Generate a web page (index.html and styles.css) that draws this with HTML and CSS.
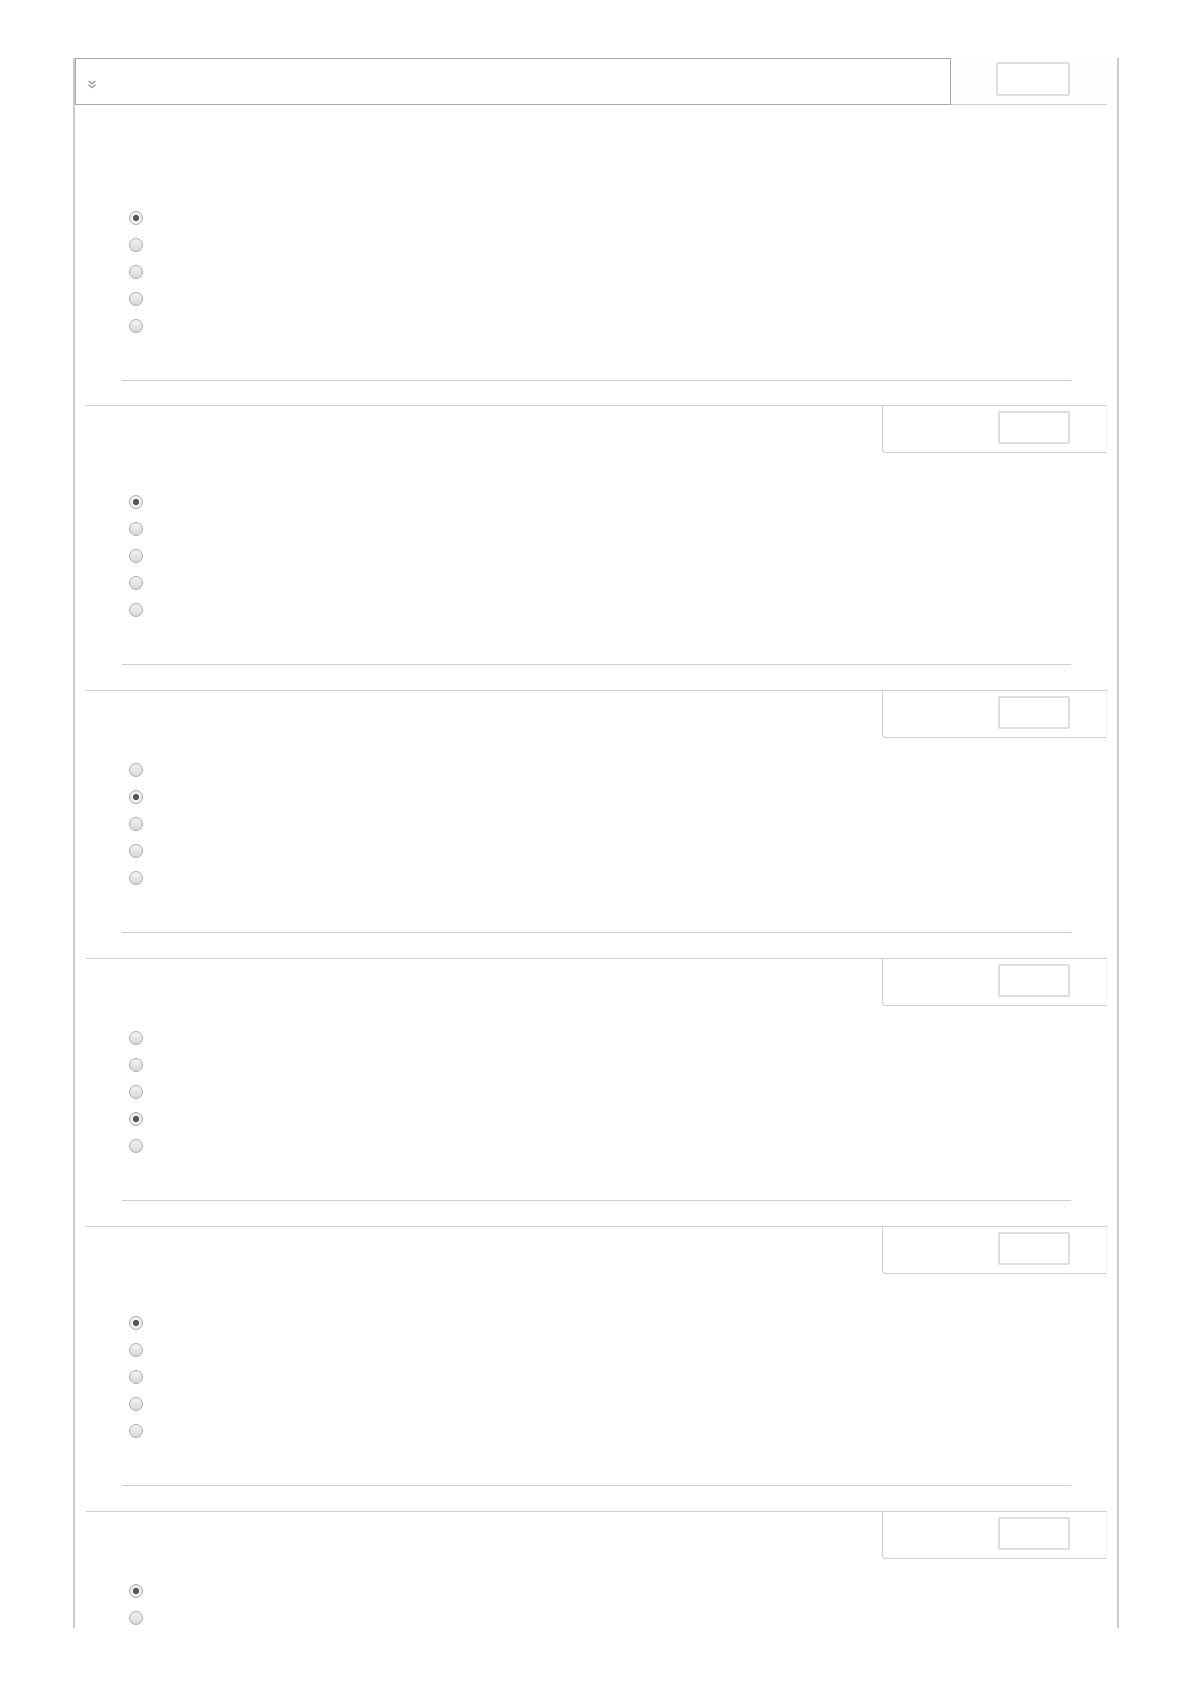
FILE: index.html
```html
<!DOCTYPE html>
<html>
<head>
    <title>Quiz</title>
    <link rel="stylesheet" href="styles.css">
</head>
<body>
    <div id="quizPage">
        <div class="quizHeader">
            <div class="headerBox">
                <svg class="collapseIcon" width="10" height="9" viewBox="0 0 10 9">
                    <path d="M1.5 1 L5 3.8 L8.5 1" />
                    <path d="M1.5 4.8 L5 7.6 L8.5 4.8" />
                </svg>
            </div>
            <div class="headerGrade">
                <div class="gradeBox"></div>
            </div>
        </div>

        <div class="que first">
            <div class="qtext tall"></div>
            <div class="answer">
                <div class="option"><input type="radio" name="q1" checked></div>
                <div class="option"><input type="radio" name="q1"></div>
                <div class="option"><input type="radio" name="q1"></div>
                <div class="option"><input type="radio" name="q1"></div>
                <div class="option"><input type="radio" name="q1"></div>
            </div>
            <div class="separator"></div>
        </div>

        <div class="que">
            <div class="info"><div class="gradeBox"></div></div>
            <div class="qtext twoLines"></div>
            <div class="answer">
                <div class="option"><input type="radio" name="q2" checked></div>
                <div class="option"><input type="radio" name="q2"></div>
                <div class="option"><input type="radio" name="q2"></div>
                <div class="option"><input type="radio" name="q2"></div>
                <div class="option"><input type="radio" name="q2"></div>
            </div>
            <div class="separator"></div>
        </div>

        <div class="que">
            <div class="info"><div class="gradeBox"></div></div>
            <div class="qtext"></div>
            <div class="answer">
                <div class="option"><input type="radio" name="q3"></div>
                <div class="option"><input type="radio" name="q3" checked></div>
                <div class="option"><input type="radio" name="q3"></div>
                <div class="option"><input type="radio" name="q3"></div>
                <div class="option"><input type="radio" name="q3"></div>
            </div>
            <div class="separator"></div>
        </div>

        <div class="que">
            <div class="info"><div class="gradeBox"></div></div>
            <div class="qtext"></div>
            <div class="answer">
                <div class="option"><input type="radio" name="q4"></div>
                <div class="option"><input type="radio" name="q4"></div>
                <div class="option"><input type="radio" name="q4"></div>
                <div class="option"><input type="radio" name="q4" checked></div>
                <div class="option"><input type="radio" name="q4"></div>
            </div>
            <div class="separator"></div>
        </div>

        <div class="que">
            <div class="info"><div class="gradeBox"></div></div>
            <div class="qtext twoLines"></div>
            <div class="answer">
                <div class="option"><input type="radio" name="q5" checked></div>
                <div class="option"><input type="radio" name="q5"></div>
                <div class="option"><input type="radio" name="q5"></div>
                <div class="option"><input type="radio" name="q5"></div>
                <div class="option"><input type="radio" name="q5"></div>
            </div>
            <div class="separator"></div>
        </div>

        <div class="que">
            <div class="info"><div class="gradeBox"></div></div>
            <div class="qtext"></div>
            <div class="answer">
                <div class="option"><input type="radio" name="q6" checked></div>
                <div class="option"><input type="radio" name="q6"></div>
                <div class="option"><input type="radio" name="q6"></div>
                <div class="option"><input type="radio" name="q6"></div>
                <div class="option"><input type="radio" name="q6"></div>
            </div>
            <div class="separator"></div>
        </div>
    </div>
</body>
</html>
```

FILE: styles.css
```css
body, html {
    margin: 0;
    padding: 0;
    background-color: #fff;
    font-family: "Liberation Sans", Arial, sans-serif;
    font-size: 13px;
}
#quizPage {
    margin: 58px 0 0 73px;
    width: 1042px;
    height: 1570px;
    overflow: hidden;
    border-left: 2px solid #ccc;
    border-right: 2px solid #ccc;
}

/* top bar */
.quizHeader {
    display: flex;
}
.headerBox {
    box-sizing: border-box;
    width: 876px;
    height: 47px;
    border: 1px solid #a8a8a8;
    padding: 21px 0 0 11px;
}
.collapseIcon {
    display: block;
}
.collapseIcon path {
    fill: none;
    stroke: #999;
    stroke-width: 1.4;
}
.headerGrade {
    box-sizing: border-box;
    width: 156px;
    height: 47px;
    padding: 4px 0 0 45px;
    background-color: #fefefe;
    border-bottom: 1px solid #ccc;
}
.headerGrade .gradeBox {
    width: 74px;
    height: 34px;
}
.gradeBox {
    box-sizing: border-box;
    width: 72px;
    height: 33px;
    border: 2px solid #ddd;
    border-radius: 2px;
    background-color: #fff;
}

/* questions */
.que {
    margin: 0 10px 0 11px;
    border-top: 1px solid #ccc;
}
.que.first {
    border-top: none;
}
.info {
    float: right;
    box-sizing: border-box;
    width: 225px;
    height: 47px;
    padding: 5px 36px 0 0;
    display: flex;
    justify-content: flex-end;
    border-left: 1px solid #ccc;
    border-bottom: 1px solid #ccc;
    border-right: 1px solid #f3f3f3;
    border-bottom-left-radius: 4px;
}
.qtext {
    height: 65px;
}
.qtext.twoLines {
    height: 82px;
}
.qtext.tall {
    height: 99px;
}
.answer {
    padding-left: 43px;
}
.option {
    height: 27px;
    display: flex;
    align-items: center;
}
.option input {
    -webkit-appearance: none;
    appearance: none;
    box-sizing: border-box;
    width: 14px;
    height: 14px;
    margin: 0;
    border: 1px solid #aaa;
    border-radius: 50%;
    background: linear-gradient(#f2f2f2, #d8d8d8);
}
.option input:checked {
    background: radial-gradient(circle, #555 0, #555 2.8px, #f4f4f4 3.4px, #e0e0e0 100%);
}
.separator {
    margin: 41px 36px 25px 36px;
    border-top: 1px solid #ccc;
}
.que.first .separator {
    margin-bottom: 24px;
}
```
